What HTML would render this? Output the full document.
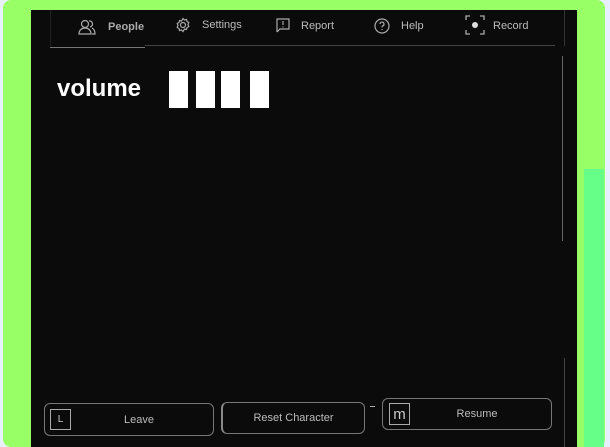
<!DOCTYPE html>
<html><head><style>
*{margin:0;padding:0;box-sizing:border-box}
body{width:610px;height:447px;background:#e6f0ff;position:relative;overflow:hidden;font-family:"Liberation Sans",sans-serif}
.g{position:absolute;left:3px;top:0;width:602px;height:447px;background:#99ff66;border-radius:8px}
.g2{position:absolute;left:584px;top:169px;width:20px;height:278px;background:#66ff88}
.p{position:absolute;left:31px;top:10px;width:546px;height:437px;background:#0b0b0b}
.t{position:absolute;color:#bbb;font-size:11px}
.ln{position:absolute;height:1px;background:#555}
.btn{position:absolute;border:1px solid #777;border-radius:6px;color:#bbb;font-size:11px;display:flex;align-items:center;justify-content:center}
.bar{position:absolute;top:71px;width:19px;height:37px;background:#fff}
svg{position:absolute}
</style></head><body>
<div class="g"></div><div class="g2"></div>
<div class="p"></div>
<div style="position:absolute;left:50px;top:10px;width:515px;height:36px;border-right:1px solid #333;border-left:1px solid #222"></div>
<div class="ln" style="left:50px;top:47px;width:95px;background:#777"></div>
<div class="ln" style="left:145px;top:45px;width:410px;background:#444"></div>
<div style="position:absolute;left:562px;top:56px;width:1px;height:185px;background:#666"></div>
<div style="position:absolute;left:564px;top:358px;width:1px;height:89px;background:#444"></div>
<svg style="left:77px;top:19px" width="20" height="18" viewBox="0 0 20 18" fill="none" stroke="#aaa" stroke-width="1.2"><circle cx="8" cy="5" r="3.5"/><path d="M2 15c0-4 3-6 6-6s6 2 6 6z"/><path d="M12 2a3 3 0 1 1 1 6M15 9c2 1 3 3 3 6h-3"/></svg>
<div class="t" style="left:108px;top:21px;font-weight:bold;color:#aaa">People</div>
<svg style="left:175px;top:17px" width="16" height="16" viewBox="0 0 16 16" fill="none" stroke="#aaa" stroke-width="1.2"><circle cx="8" cy="8" r="2.5"/><path d="M8 1.5l1.5 1.5 2-.5.5 2 1.8 1-.8 2 .8 2-1.8 1-.5 2-2-.5L8 14.5 6.5 13l-2 .5-.5-2-1.8-1 .8-2-.8-2 1.8-1 .5-2 2 .5z"/></svg>
<div class="t" style="left:202px;top:19px">Settings</div>
<svg style="left:275px;top:17px" width="16" height="16" viewBox="0 0 16 16" fill="none" stroke="#aaa" stroke-width="1.2"><path d="M2 15V2h12v10H5l-3 3M8 4v4M8 9.5v1"/></svg>
<div class="t" style="left:301px;top:20px">Report</div>
<svg style="left:374px;top:18px" width="16" height="16" viewBox="0 0 16 16" fill="none" stroke="#aaa" stroke-width="1.2"><circle cx="8" cy="8" r="7"/><path d="M6 6a2 2 0 1 1 2.5 2c-.5.2-.5.8-.5 1.5M8 11v1"/></svg>
<div class="t" style="left:401px;top:20px">Help</div>
<svg style="left:465px;top:15px" width="20" height="20" viewBox="0 0 20 20" fill="none" stroke="#aaa" stroke-width="1.3"><path d="M1 5V1h4M15 1h4v4M19 15v4h-4M5 19H1v-4"/><circle cx="10" cy="10" r="3" fill="#ddd" stroke="none"/></svg>
<div class="t" style="left:493px;top:20px">Record</div>
<div style="position:absolute;left:57px;top:75px;color:#fff;font-size:24px;font-weight:bold">volume</div>
<div class="bar" style="left:169px"></div><div class="bar" style="left:196px"></div><div class="bar" style="left:221px"></div><div class="bar" style="left:250px"></div>
<div class="btn" style="left:44px;top:403px;width:170px;height:33px;padding-left:20px">Leave</div>
<div style="position:absolute;left:50px;top:409px;width:21px;height:21px;border:1px solid #aaa;color:#ccc;font-size:10px;display:flex;align-items:center;justify-content:center">L</div>
<div class="btn" style="left:221px;top:402px;width:144px;height:32px;border-left:2px solid #888">Reset Character</div>
<div style="position:absolute;left:370px;top:406px;width:5px;height:1px;background:#aaa"></div>
<div class="btn" style="left:382px;top:398px;width:170px;height:32px;padding-left:20px">Resume</div>
<div style="position:absolute;left:389px;top:403px;width:21px;height:22px;border:1px solid #aaa;color:#ccc;font-size:15px;display:flex;align-items:center;justify-content:center;line-height:1">m</div>
</body></html>
